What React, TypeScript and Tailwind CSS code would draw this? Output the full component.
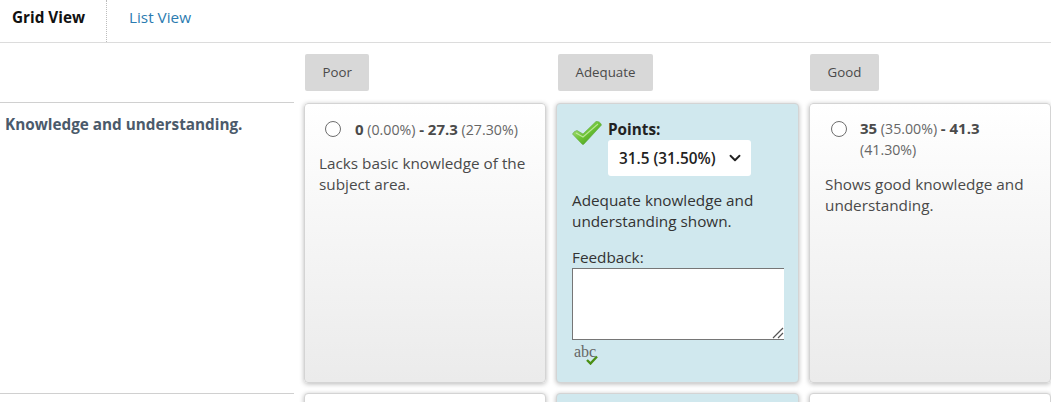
import { ChevronDown } from "lucide-react";

function Radio() {
  return <span className="block w-[16px] h-[16px] rounded-full border-[1.5px] border-[#6e6e6e] bg-white shrink-0" />;
}

function Header({ label, offset }: { label: string; offset: string }) {
  return (
    <div className={offset}>
      <span className="inline-flex items-center h-[37px] px-[17.5px] bg-[#d8d8d8] rounded-[2px] text-[13.3px] text-[#4a4a4a]">
        {label}
      </span>
    </div>
  );
}

const cardClass =
  "h-full rounded-[4px] border border-[#d4d4d4] shadow-[0_1px_5px_rgba(0,0,0,0.28)]";

export default function App() {
  return (
    <div className="w-[1051px] h-[402px] overflow-hidden bg-white font-['Open_Sans',sans-serif] text-[#4a4a4a]">
      {/* Tabs */}
      <div className="flex h-[43px] border-b border-[#dcdcdc]">
        <div className="w-[107px] pl-[12px] pt-[6px] border-r border-dotted border-[#bdbdbd] text-[15.3px] font-bold text-[#111]">
          Grid View
        </div>
        <div className="pl-[22px] pt-[6px] text-[15.3px] text-[#2b7bb0]">List View</div>
      </div>

      {/* Rubric grid */}
      <div className="grid grid-cols-[294px_252px_253px_252px] grid-rows-[60px_290px_20px]">
        <div className="border-b border-[#d0d0d0]" />
        <div className="pt-[11px]"><Header label="Poor" offset="pl-[11px]" /></div>
        <div className="pt-[11px]"><Header label="Adequate" offset="pl-[12px]" /></div>
        <div className="pt-[11px]"><Header label="Good" offset="pl-[11px]" /></div>

        <div className="pl-[5px] pt-[10px] text-[15.3px] font-bold text-[#4b5a6b]">
          Knowledge and understanding.
        </div>

        <div className="pl-[10px] pb-[10px]">
          <div className={`${cardClass} bg-gradient-to-b from-white to-[#ebebeb] pl-[14px] pr-[12px] pt-[15px]`}>
            <div className="flex items-center pl-[6px] h-[20px] text-[14.2px] whitespace-nowrap">
              <Radio />
              <span className="ml-[14px]">
                <b className="text-[15px]">0</b> <span className="text-[#666]">(0.00%)</span>{" "}
                <b className="text-[15px]">- 27.3</b> <span className="text-[#666]">(27.30%)</span>
              </span>
            </div>
            <p className="mt-[14px] text-[15.3px] leading-[21px]">
              Lacks basic knowledge of the subject area.
            </p>
          </div>
        </div>

        <div className="pl-[10px] pb-[10px]">
          <div className={`${cardClass} bg-[#d0e8ee] pl-[15px] pt-[15px] text-[#333]`}>
            <div className="flex">
              <svg viewBox="0 0 30 24" className="w-[30px] h-[24px] mt-[2px] shrink-0">
                <defs>
                  <linearGradient id="chk" x1="0" y1="0" x2="1" y2="1">
                    <stop offset="0" stopColor="#c3eb9a" />
                    <stop offset="0.5" stopColor="#6cc334" />
                    <stop offset="1" stopColor="#3d8f1c" />
                  </linearGradient>
                </defs>
                <path
                  d="M0.5 13 Q2 10 5 9.5 L11 13 L24 0.5 Q28 0 29.5 4 L12 23 Q11 24 10 23 Z"
                  fill="url(#chk)"
                  stroke="#5da83a"
                  strokeWidth="0.6"
                />
                <path d="M4 12 L11 16 L26 3" fill="none" stroke="#d9f5be" strokeWidth="1.2" opacity="0.7" />
              </svg>
              <div className="ml-[6px]">
                <div className="text-[15.3px] font-bold leading-[20px] text-[#222]">Points:</div>
                <div className="mt-[1px] flex items-center w-[143px] h-[36px] bg-white rounded-[3px] pl-[11px] text-[15.3px] font-semibold text-[#222]">
                  31.5 (31.50%)
                  <ChevronDown className="ml-[10px] w-[18px] h-[18px] text-[#222]" strokeWidth={2.5} />
                </div>
              </div>
            </div>
            <p className="mt-[14px] text-[15.3px] leading-[21px]">
              Adequate knowledge and understanding shown.
            </p>
            <div className="mt-[15px] text-[15.3px] leading-[21px]">Feedback:</div>
            <div className="relative w-[212px] h-[72px]">
              <textarea className="block w-full h-full bg-white border border-[#767676] border-r-0 rounded-none resize-none" />
              <svg viewBox="0 0 12 12" className="absolute right-0 bottom-[1px] w-[12px] h-[12px]">
                <path d="M1 11 L11 1 M6 11 L11 6" stroke="#555" strokeWidth="1.2" />
              </svg>
            </div>
            <div className="relative w-[30px] h-[26px] mt-[4px] ml-[2px] font-['Liberation_Serif',serif] text-[16px] leading-[16px] text-[#666]">
              abc
              <svg viewBox="0 0 12 10" className="absolute left-[12px] top-[11px] w-[12px] h-[10px]">
                <path d="M1 5 L4.5 8.5 L11 1.5" fill="none" stroke="#4a8f14" strokeWidth="2.4" />
              </svg>
            </div>
          </div>
        </div>

        <div className="pl-[10px] pb-[10px]">
          <div className={`${cardClass} bg-gradient-to-b from-white to-[#ebebeb] pl-[15px] pr-[12px] pt-[14px]`}>
            <div className="flex pl-[6px] text-[14.2px] leading-[21px]">
              <span className="mt-[3px]"><Radio /></span>
              <span className="ml-[13px]">
                <b className="text-[15px]">35</b> <span className="text-[#666]">(35.00%)</span>{" "}
                <b className="text-[15px]">- 41.3</b> <span className="text-[#666]">(41.30%)</span>
              </span>
            </div>
            <p className="mt-[14px] text-[15.3px] leading-[21px]">
              Shows good knowledge and understanding.
            </p>
          </div>
        </div>

        {/* Next row, cut off by the window */}
        <div className="border-t border-[#d0d0d0]" />
        <div className="pl-[10px]"><div className={`${cardClass} bg-white`} /></div>
        <div className="pl-[10px]"><div className={`${cardClass} bg-[#d0e8ee]`} /></div>
        <div className="pl-[10px]"><div className={`${cardClass} bg-white`} /></div>
      </div>
    </div>
  );
}
